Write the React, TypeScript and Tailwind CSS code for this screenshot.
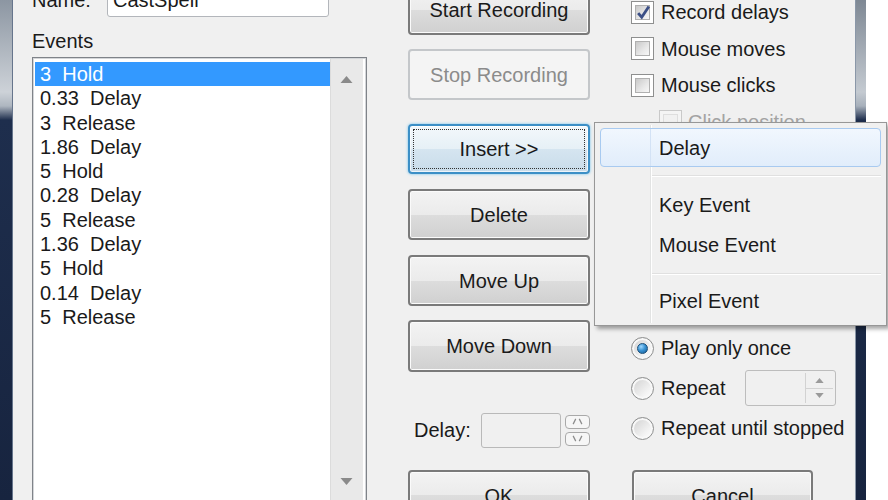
import React from 'react';

const events = [
  '3  Hold',
  '0.33  Delay',
  '3  Release',
  '1.86  Delay',
  '5  Hold',
  '0.28  Delay',
  '5  Release',
  '1.36  Delay',
  '5  Hold',
  '0.14  Delay',
  '5  Release',
];

type BtnProps = {
  label: string;
  className?: string;
  variant?: 'normal' | 'disabled' | 'focused';
};

const Button: React.FC<BtnProps> = ({ label, className = '', variant = 'normal' }) => {
  if (variant === 'disabled') {
    return (
      <div
        className={`flex items-center justify-center rounded-[4px] border-2 border-[#c4c7ca] bg-[#f4f4f4] text-[#8b8b8b] ${className}`}
      >
        {label}
      </div>
    );
  }
  if (variant === 'focused') {
    return (
      <div
        className={`relative flex items-center justify-center rounded-[4px] border-2 border-[#3c8fc6] bg-[linear-gradient(to_bottom,#f3f8fb_0%,#e6f0f6_50%,#d5e5f0_50%,#c9dcea_100%)] shadow-[0_0_3px_#6cc2ef,inset_0_0_0_1px_#ffffffb0] ${className}`}
      >
        <div className="absolute inset-[3px] border border-dotted border-[#333]" />
        {label}
      </div>
    );
  }
  return (
    <div
      className={`flex items-center justify-center rounded-[4px] border-2 border-[#7a7a7a] bg-[linear-gradient(to_bottom,#f3f3f3_0%,#ebebeb_50%,#dddddd_50%,#d0d0d0_100%)] shadow-[inset_0_0_0_1px_#fbfbfb] ${className}`}
    >
      {label}
    </div>
  );
};

const CheckBox: React.FC<{ checked?: boolean; disabled?: boolean }> = ({ checked, disabled }) => (
  <div
    className={`flex h-[23px] w-[23px] shrink-0 items-center justify-center border ${
      disabled ? 'border-[#c9c9c9] bg-[#f4f4f4]' : 'border-[#8e8f8f] bg-white'
    }`}
  >
    <div
      className={`relative h-[15px] w-[15px] border ${
        disabled
          ? 'border-[#dedede] bg-[#f1f1f1]'
          : 'border-[#b0b0b0] bg-[linear-gradient(135deg,#c9c9c9_0%,#e8e8e8_60%,#f7f7f7_100%)]'
      }`}
    >
      {checked && (
        <svg viewBox="0 0 16 16" className="absolute left-[-2px] top-[-3px] h-[19px] w-[19px]">
          <path d="M3.5 8.5 L6.5 12 L12.5 3" fill="none" stroke="#3b4f86" strokeWidth="2.4" />
        </svg>
      )}
    </div>
  </div>
);

const Radio: React.FC<{ checked?: boolean }> = ({ checked }) => (
  <div className="flex h-[23px] w-[23px] shrink-0 items-center justify-center rounded-full border border-[#8e8f8f] bg-[linear-gradient(135deg,#cfcfcf_0%,#f4f4f4_70%,#ffffff_100%)] shadow-[inset_0_0_0_2px_#f8f8f8]">
    {checked && (
      <div className="h-[11px] w-[11px] rounded-full border border-[#1b4e78] bg-[radial-gradient(circle_at_35%_30%,#9fd8ff_0%,#3a93d3_45%,#135a94_100%)]" />
    )}
  </div>
);

const Chevron: React.FC<{ up?: boolean; color?: string }> = ({ up, color = '#7a7a7a' }) => (
  <svg viewBox="0 0 10 6" className="h-[5px] w-[9px]">
    <path d={up ? 'M0 6 L5 0 L10 6 Z' : 'M0 0 L5 6 L10 0 Z'} fill={color} />
  </svg>
);

const TinySpin: React.FC<{ up?: boolean }> = ({ up }) => (
  <div className="flex h-[14px] w-[25px] items-center justify-center rounded-[4px] border border-[#a9a9a9] bg-[#f6f6f6]">
    <svg viewBox="0 0 14 8" className="h-[7px] w-[13px]">
      <path
        d={up ? 'M2 7 L5 1 M9 1 L12 7' : 'M2 1 L5 7 M9 7 L12 1'}
        fill="none"
        stroke="#8c8c8c"
        strokeWidth="1.4"
      />
    </svg>
  </div>
);

const App: React.FC = () => {
  return (
    <div className="relative flex h-[500px] w-[888px] overflow-hidden bg-white font-['Liberation_Sans',Arial,sans-serif] text-[20px] text-[#1a1a1a]">
      {/* left window frame */}
      <div className="h-full w-[13px] shrink-0 border-r border-[#66758c] bg-[linear-gradient(to_bottom,#8c96a2_0px,#cdd2d8_92px,#aeb6c0_106px,#1e2e4d_120px,#17243f_100%)]" />

      {/* client area */}
      <div className="flex h-full w-[842px] shrink-0 items-start bg-[#f0f0f0]">
        {/* left column */}
        <div className="ml-[19px] mt-[-17px] flex w-[335px] flex-col">
          <div className="flex h-[34px] items-center">
            <span className="w-[75px]">Name:</span>
            <div className="flex h-[34px] w-[222px] items-center rounded-[3px] border border-[#b3b6bb] bg-white pl-[5px]">
              CastSpell
            </div>
          </div>
          <div className="mt-[12px] h-[24px] leading-[24px]">Events</div>
          <div className="mt-[4px] flex h-[446px] border border-[#7f8389] bg-white shadow-[inset_0_0_0_1px_#d4d6d9]">
            <div className="ml-[2px] w-[295px] pt-[4px]">
              {events.map((e, i) => (
                <div
                  key={i}
                  className={`h-[24.3px] whitespace-pre pl-[5px] leading-[24.3px] ${
                    i === 0 ? 'bg-[#3399ff] text-white' : ''
                  }`}
                >
                  {e}
                </div>
              ))}
            </div>
            <div className="my-[1px] flex w-[33px] flex-col bg-[#e9e9e9] shadow-[inset_1px_0_0_#dcdcdc]">
              <div className="flex h-[40px] items-center justify-center">
                <svg viewBox="0 0 12 7" className="h-[7px] w-[13px]">
                  <path d="M0 7 L6 0 L12 7 Z" fill="#8a8a8a" />
                </svg>
              </div>
              <div className="flex-1" />
              <div className="flex h-[40px] items-center justify-center">
                <svg viewBox="0 0 12 7" className="h-[7px] w-[13px]">
                  <path d="M0 0 L6 7 L12 0 Z" fill="#8a8a8a" />
                </svg>
              </div>
            </div>
          </div>
        </div>

        {/* middle column */}
        <div className="ml-[41px] mt-[-16px] flex w-[182px] flex-col">
          <Button label="Start Recording" className="h-[51px]" />
          <Button label="Stop Recording" variant="disabled" className="mt-[14px] h-[51px]" />
          <Button label="Insert >>" variant="focused" className="mt-[24px] h-[50px]" />
          <Button label="Delete" className="mt-[15px] h-[51px]" />
          <Button label="Move Up" className="mt-[15px] h-[51px]" />
          <Button label="Move Down" className="mt-[14px] h-[52px]" />
          <div className="mt-[40px] flex h-[36px] items-center">
            <span className="ml-[6px] w-[67px]">Delay:</span>
            <div className="h-[35px] w-[81px] rounded-[3px] border border-[#b9b9b9] bg-[#f0f0f0]" />
            <div className="ml-[4px] flex flex-col gap-[3px]">
              <TinySpin up />
              <TinySpin />
            </div>
          </div>
          <Button label="OK" className="mt-[22px] h-[51px]" />
        </div>

        {/* right column */}
        <div className="ml-[41px] mt-[-6px] flex w-[223px] flex-col">
          <div className="flex h-[36.5px] items-center">
            <CheckBox checked />
            <span className="ml-[7px]">Record delays</span>
          </div>
          <div className="flex h-[36.5px] items-center">
            <CheckBox />
            <span className="ml-[7px]">Mouse moves</span>
          </div>
          <div className="flex h-[36.5px] items-center">
            <CheckBox />
            <span className="ml-[7px]">Mouse clicks</span>
          </div>
          <div className="ml-[28px] flex h-[36.5px] items-center">
            <CheckBox disabled />
            <span className="ml-[6px] text-[#a3a3a3]">Click position</span>
          </div>

          <div className="mt-[188px] flex h-[40px] items-center">
            <Radio checked />
            <span className="ml-[7px]">Play only once</span>
          </div>
          <div className="flex h-[40px] items-center">
            <Radio />
            <span className="ml-[7px] w-[84px]">Repeat</span>
            <div className="flex h-[36px] w-[91px] rounded-[3px] border border-[#bdbdbd] bg-[#f0f0f0]">
              <div className="flex-1" />
              <div className="my-[2px] mr-[2px] flex w-[28px] flex-col border-l border-[#d2d2d2]">
                <div className="flex flex-1 items-center justify-center border-b border-[#d2d2d2]">
                  <Chevron up color="#9a9a9a" />
                </div>
                <div className="flex flex-1 items-center justify-center">
                  <Chevron color="#9a9a9a" />
                </div>
              </div>
            </div>
          </div>
          <div className="flex h-[40px] items-center">
            <Radio />
            <span className="ml-[7px]">Repeat until stopped</span>
          </div>
          <Button label="Cancel" className="ml-[1px] mt-[22px] h-[51px] w-[181px]" />
        </div>
      </div>

      {/* right window frame */}
      <div className="h-full w-[11px] shrink-0 border-l border-[#8a97a8] bg-[linear-gradient(to_bottom,#7e8894_0px,#c4cad1_92px,#a7b0bb_106px,#1e2e4d_120px,#17243f_100%)]" />
      <div className="flex-1 bg-white" />

      {/* popup menu */}
      <div className="absolute left-[594px] top-[122px] flex h-[204px] w-[293px] flex-col border border-[#979797] bg-[#f0f0f0] px-[5px] py-[5px] shadow-[3px_3px_4px_rgba(0,0,0,0.35)]">
        <div className="absolute bottom-[2px] left-[55px] top-[2px] w-[2px] border-l border-[#e2e3e3] bg-white" />
        <div className="relative flex h-[39px] items-center rounded-[4px] border border-[#a8caf0] bg-[linear-gradient(to_bottom,#f1f7fe_0%,#e1edfb_100%)] pl-[58px]">
          <div className="absolute bottom-0 left-[49px] top-0 w-[1px] bg-[#d3e2f5]" />
          Delay
        </div>
        <div className="flex h-[18px] items-center pl-[52px]">
          <div className="h-[2px] w-full border-t border-[#e0e0e0] bg-white" />
        </div>
        <div className="flex h-[40px] items-center pl-[59px]">Key Event</div>
        <div className="flex h-[40px] items-center pl-[59px]">Mouse Event</div>
        <div className="flex h-[17px] items-center pl-[52px]">
          <div className="h-[2px] w-full border-t border-[#e0e0e0] bg-white" />
        </div>
        <div className="flex h-[38px] items-center pl-[59px]">Pixel Event</div>
      </div>
    </div>
  );
};

export default App;
